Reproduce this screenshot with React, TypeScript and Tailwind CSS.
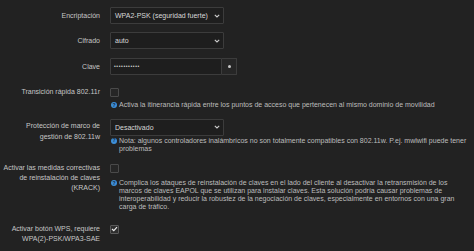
import React from 'react';

function Chevron() {
  return (
    <svg width="6" height="4" viewBox="0 0 6 4" className="shrink-0">
      <path d="M0.8 0.8 L3 3 L5.2 0.8" fill="none" stroke="#cccccc" strokeWidth="1.1" />
    </svg>
  );
}

function Select({ value }: { value: string }) {
  return (
    <div className="flex h-[17px] w-[114px] items-center justify-between rounded-[1px] border border-[#3c3c3c] bg-[#1e1e1e] pl-[4px] pr-[3px] text-[#d8d8d8]">
      <span className="leading-none">{value}</span>
      <Chevron />
    </div>
  );
}

function Checkbox({ checked = false }: { checked?: boolean }) {
  return (
    <div
      className={`mt-[1px] flex h-[9px] w-[9px] items-center justify-center rounded-[1px] border ${
        checked ? 'border-[#5a5a5a] bg-[#2e2e2e]' : 'border-[#4a4a4a] bg-[#262626]'
      }`}
    >
      {checked && (
        <svg width="7" height="6" viewBox="0 0 7 6">
          <path d="M1 3 L2.8 4.7 L6 1.2" fill="none" stroke="#ececec" strokeWidth="1.2" />
        </svg>
      )}
    </div>
  );
}

function Help({ lines, className = '' }: { lines: string[]; className?: string }) {
  return (
    <div className={`flex items-start text-[#bdbdbd] ${className}`}>
      <span className="ml-[1px] mt-[1px] flex h-[6px] w-[6px] shrink-0 items-center justify-center rounded-full bg-[#3d8fd8] text-[5px] font-bold leading-none text-[#10253a]">
        ?
      </span>
      <div className="ml-[2px] leading-[7.8px]">
        {lines.map((l, i) => (
          <div key={i} className="whitespace-nowrap">
            {l}
          </div>
        ))}
      </div>
    </div>
  );
}

function Label({ children, className = '' }: { children: React.ReactNode; className?: string }) {
  return (
    <div className={`w-[110px] shrink-0 pr-[10px] text-right text-[#c6c6c6] ${className}`}>{children}</div>
  );
}

export default function App() {
  return (
    <div
      className="h-[251px] w-[474px] overflow-hidden bg-[#222222] pt-[7px] text-[7px]"
      style={{ fontFamily: '"Liberation Sans", Arial, sans-serif' }}
    >
      {/* Encriptación */}
      <div className="flex">
        <Label className="leading-[17px]">Encriptación</Label>
        <Select value="WPA2-PSK (seguridad fuerte)" />
      </div>

      {/* Cifrado */}
      <div className="mt-[8px] flex">
        <Label className="leading-[17px]">Cifrado</Label>
        <Select value="auto" />
      </div>

      {/* Clave */}
      <div className="mt-[9px] flex">
        <Label className="leading-[17px]">Clave</Label>
        <div className="flex h-[17px]">
          <div className="flex w-[112px] items-center rounded-l-[1px] border border-[#3c3c3c] bg-[#1e1e1e] pl-[3px]">
            <span className="text-[5px] leading-none tracking-[0.6px] text-[#d4d4d4]">•••••••••••</span>
          </div>
          <div className="flex w-[15px] items-center justify-center rounded-r-[1px] border border-l-0 border-[#3c3c3c] bg-[#262626]">
            <span className="h-[3px] w-[3px] rounded-full bg-[#c8c8c8]" />
          </div>
        </div>
      </div>

      {/* 802.11r */}
      <div className="mt-[12px] flex">
        <Label className="leading-[10px]">Transición rápida 802.11r</Label>
        <div>
          <Checkbox />
          <Help
            className="mt-[4px]"
            lines={['Activa la itinerancia rápida entre los puntos de acceso que pertenecen al mismo dominio de movilidad']}
          />
        </div>
      </div>

      {/* 802.11w */}
      <div className="mt-[10px] flex">
        <Label className="pt-[1px] leading-[11px]">
          Protección de marco de
          <br />
          gestión de 802.11w
        </Label>
        <div>
          <Select value="Desactivado" />
          <Help
            className="mt-[1px]"
            lines={[
              'Nota: algunos controladores inalámbricos no son totalmente compatibles con 802.11w. P.ej. mwlwifi puede tener',
              'problemas',
            ]}
          />
        </div>
      </div>

      {/* KRACK */}
      <div className="mt-[11px] flex">
        <Label className="leading-[10px]">
          Activar las medidas correctivas
          <br />
          de reinstalación de claves
          <br />
          (KRACK)
        </Label>
        <div>
          <Checkbox />
          <Help
            className="mt-[6px]"
            lines={[
              'Complica los ataques de reinstalación de claves en el lado del cliente al desactivar la retransmisión de los',
              'marcos de claves EAPOL que se utilizan para instalar claves. Esta solución podría causar problemas de',
              'interoperabilidad y reducir la robustez de la negociación de claves, especialmente en entornos con una gran',
              'carga de tráfico.',
            ]}
          />
        </div>
      </div>

      {/* WPS */}
      <div className="mt-[13px] flex">
        <Label className="leading-[10px]">
          Activar botón WPS, requiere
          <br />
          WPA(2)-PSK/WPA3-SAE
        </Label>
        <div>
          <Checkbox checked />
        </div>
      </div>
    </div>
  );
}
